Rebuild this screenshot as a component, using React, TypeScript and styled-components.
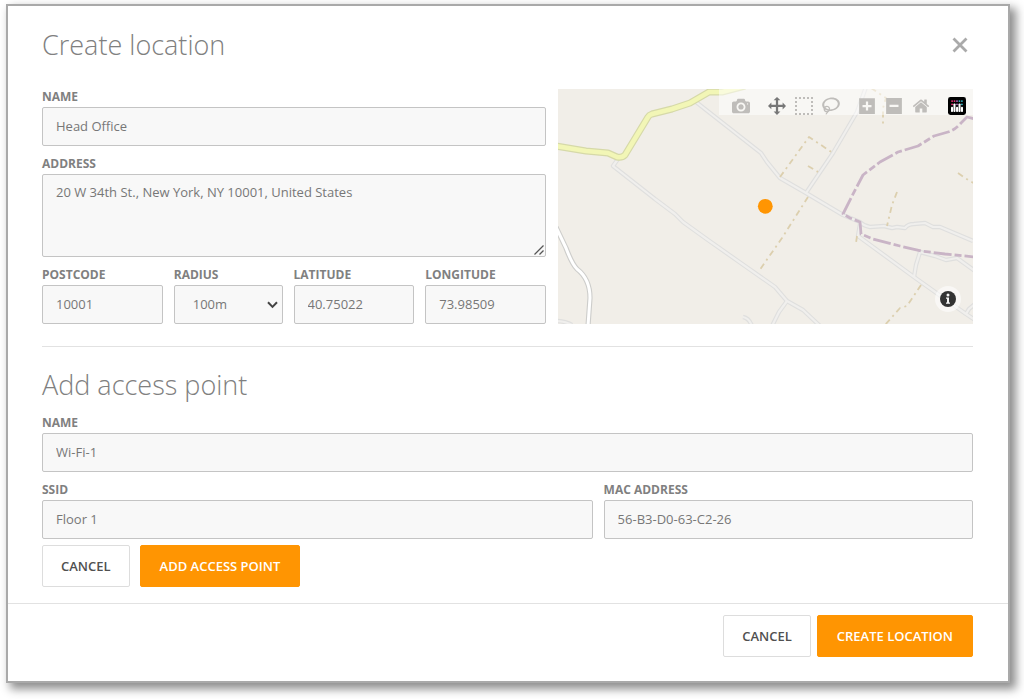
import React from "react";
import styled, { createGlobalStyle, css } from "styled-components";

const GlobalStyle = createGlobalStyle`
  *, *::before, *::after { box-sizing: border-box; }
  body {
    margin: 0;
    background: #fff;
    font-family: "Open Sans", "Noto Sans", sans-serif;
    font-size: 13px;
    color: #777;
  }
`;

const Page = styled.main`
  padding: 4px 14px 16px 6px;
`;

const Dialog = styled.section`
  background: #fff;
  border: 2px solid #a9a9a9;
  box-shadow: 5px 5px 9px 1px rgba(0, 0, 0, 0.45);
`;

const Header = styled.header`
  display: flex;
  align-items: center;
  justify-content: space-between;
  padding: 19px 40px 24px 34px;
`;

const Title = styled.h2`
  margin: 0;
  font-size: 27px;
  line-height: 40px;
  font-weight: 300;
  color: #808080;
`;

const CloseButton = styled.button`
  display: flex;
  padding: 0;
  border: 0;
  background: none;
  color: #aaa;
  cursor: pointer;
`;

const Body = styled.div`
  padding: 0 35px 16px 34px;
`;

const LocationGrid = styled.div`
  display: grid;
  grid-template-columns: 504fr 415fr;
  gap: 12px;
`;

const Stack = styled.div`
  display: flex;
  flex-direction: column;
  gap: 10px;
  min-width: 0;
`;

const Row = styled.div<{ $columns: string }>`
  display: grid;
  grid-template-columns: ${(p) => p.$columns};
  gap: 11px;
`;

const FieldBox = styled.div`
  display: flex;
  flex-direction: column;
  gap: 2px;
  min-width: 0;
`;

const Label = styled.label`
  font-size: 12px;
  line-height: 16px;
  font-weight: 700;
  color: #808080;
  text-transform: uppercase;
`;

const control = css`
  width: 100%;
  border: 1px solid #c4c4c4;
  border-radius: 2px;
  background-color: #f8f8f8;
  color: #777;
  font: inherit;
  outline: none;
`;

const Input = styled.input`
  ${control}
  height: 39px;
  padding: 0 13px 2px;
`;

const ControlWrap = styled.div`
  position: relative;
`;

const Select = styled.select`
  ${control}
  display: block;
  height: 39px;
  padding: 0 24px 2px 18px;
  appearance: none;
`;

const Chevron = styled.svg`
  position: absolute;
  right: 5px;
  top: 16px;
  pointer-events: none;
`;

const TextArea = styled.textarea`
  ${control}
  display: block;
  height: 83px;
  padding: 7px 13px;
  line-height: 20px;
  resize: vertical;

  &::-webkit-resizer {
    background: transparent;
  }
`;

const Grip = styled.svg`
  position: absolute;
  right: 2px;
  bottom: 2px;
  pointer-events: none;
`;

const Divider = styled.hr`
  margin: 22px 0 18px;
  border: 0;
  border-top: 1px solid #e2e2e2;
`;

const Section = styled.section`
  display: flex;
  flex-direction: column;
  gap: 10px;
`;

const Actions = styled.div<{ $gap: number }>`
  display: flex;
  gap: ${(p) => p.$gap}px;
`;

const BodyActions = styled(Actions)`
  padding-top: 6px;
`;

const Button = styled.button<{ $primary?: boolean }>`
  height: 42px;
  padding: 0 ${(p) => (p.$primary ? 19 : 18)}px;
  border: 1px solid ${(p) => (p.$primary ? "#ff9502" : "#ddd")};
  border-radius: 2px;
  background: ${(p) => (p.$primary ? "#ff9502" : "#fff")};
  color: ${(p) => (p.$primary ? "#fff" : "#505050")};
  font: inherit;
  font-weight: 600;
  text-transform: uppercase;
  white-space: nowrap;
  cursor: pointer;
`;

const Footer = styled.footer`
  display: flex;
  justify-content: flex-end;
  padding: 11px 35px 24px;
  border-top: 1px solid #e2e2e2;
`;

const MapFrame = styled.div`
  position: relative;
  min-height: 235px;
  overflow: hidden;
  background: #f1eee8;
`;

const MapCanvas = styled.svg`
  position: absolute;
  inset: 0;
  width: 100%;
  height: 100%;
`;

const ModeBar = styled.div`
  position: absolute;
  top: 0;
  right: 0;
  display: flex;
  gap: 18px;
  padding: 8px 7px 0 13px;
  height: 26px;
  background: rgba(255, 255, 255, 0.5);
`;

const ModeGroup = styled.div`
  display: flex;
  gap: 9px;
`;

const ModeButton = styled.button<{ $active?: boolean }>`
  display: flex;
  align-items: center;
  justify-content: center;
  width: 18px;
  height: 18px;
  padding: 0;
  border: 0;
  background: none;
  color: ${(p) => (p.$active ? "#777" : "#bfbdba")};
  cursor: pointer;
`;

const InfoButton = styled.button`
  position: absolute;
  right: 12px;
  bottom: 12px;
  display: flex;
  align-items: center;
  justify-content: center;
  width: 26px;
  height: 26px;
  padding: 0;
  border: 0;
  border-radius: 50%;
  background: rgba(255, 255, 255, 0.55);
  cursor: pointer;
`;

function Field({ id, label, children }: { id: string; label: string; children: React.ReactNode }) {
  return (
    <FieldBox>
      <Label htmlFor={id}>{label}</Label>
      {children}
    </FieldBox>
  );
}

function TextField({ id, label, value }: { id: string; label: string; value: string }) {
  return (
    <Field id={id} label={label}>
      <Input id={id} type="text" defaultValue={value} />
    </Field>
  );
}

function Glyph({ d, width, size = 18 }: { d: string; width: number; size?: number }) {
  return (
    <svg width={size} height={size} viewBox={`0 0 ${width} 1000`} fill="currentColor" aria-hidden="true">
      <path transform="matrix(1 0 0 -1 0 850)" d={d} />
    </svg>
  );
}

const glyphs = {
  camera:
    "m500 450c-83 0-150-67-150-150 0-83 67-150 150-150 83 0 150 67 150 150 0 83-67 150-150 150z m400 150h-120c-16 0-34 13-39 29l-31 93c-6 15-23 28-40 28h-340c-16 0-34-13-39-28l-31-94c-6-15-23-28-40-28h-120c-55 0-100-45-100-100v-450c0-55 45-100 100-100h800c55 0 100 45 100 100v450c0 55-45 100-100 100z m-400-550c-138 0-250 112-250 250 0 138 112 250 250 250 138 0 250-112 250-250 0-138-112-250-250-250z m365 380c-19 0-35 16-35 35 0 19 16 35 35 35 19 0 35-16 35-35 0-19-16-35-35-35z",
  pan: "m1000 350l-187 188 0-125-250 0 0 250 125 0-188 187-187-187 125 0 0-250-250 0 0 125-188-188 186-187 0 125 252 0 0-250-125 0 187-188 188 188-125 0 0 250 250 0 0-126 187 188z",
  lasso:
    "m1018 538c-36 207-290 336-568 286-277-48-473-256-436-463 10-57 36-108 76-151-13-66 11-137 68-183 34-28 75-41 114-42l-55-70 0 0c-2-1-3-2-4-3-10-14-8-34 5-45 14-11 34-8 45 4 1 1 2 3 2 5l0 0 113 140c16 11 31 24 45 40 4 3 6 7 8 11 48-3 100 0 151 9 278 48 473 255 436 462z m-624-379c-80 14-149 48-197 96 42 42 109 47 156 9 33-26 47-66 41-105z m-187-74c-19 16-33 37-39 60 50-32 109-55 174-68-42-25-95-24-135 8z m360 75c-34-7-69-9-102-8 8 62-16 128-68 170-73 59-175 54-244-5-9 20-16 40-20 61-28 159 121 317 333 354s407-60 434-217c28-159-121-318-333-355z",
  zoomIn:
    "m1 787l0-875 875 0 0 875-875 0z m687-500l-187 0 0-187-125 0 0 187-188 0 0 125 188 0 0 187 125 0 0-187 187 0 0-125z",
  zoomOut: "m0 788l0-876 876 0 0 876-876 0z m688-500l-500 0 0 125 500 0 0-125z",
  home: "m786 296v-267q0-15-11-26t-25-10h-214v214h-143v-214h-214q-15 0-25 10t-11 26v267q0 1 0 2t0 2l321 264 321-264q1-1 1-4z m124 39l-34-41q-5-5-12-6h-2q-7 0-12 3l-386 322-386-322q-7-4-13-4-7 2-12 7l-35 41q-4 5-3 13t6 12l401 334q18 15 42 15t43-15l136-114v109q0 8 5 13t13 5h107q8 0 13-5t5-13v-227l122-102q5-5 6-12t-4-13z",
};

function SelectionGlyph() {
  const steps = [0, 1, 2, 3, 4];
  return (
    <svg width="18" height="18" viewBox="0 0 18 18" fill="currentColor" aria-hidden="true">
      {steps.map((n) => (
        <React.Fragment key={n}>
          <rect x={n * 4} y="0" width="2" height="2" />
          <rect x={n * 4} y="16" width="2" height="2" />
          <rect x="0" y={n * 4} width="2" height="2" />
          <rect x="16" y={n * 4} width="2" height="2" />
        </React.Fragment>
      ))}
    </svg>
  );
}

function BrandGlyph() {
  return (
    <svg width="18" height="18" viewBox="0 0 132 132" aria-hidden="true">
      <rect width="132" height="132" rx="18" fill="#000" />
      <g fill="#fff">
        <rect x="22" y="72" width="15" height="38" rx="6" />
        <rect x="40" y="48" width="15" height="62" rx="6" />
        <rect x="59" y="72" width="15" height="38" rx="6" />
        <rect x="77" y="48" width="15" height="62" rx="6" />
        <rect x="95" y="72" width="15" height="38" rx="6" />
      </g>
      <g fill="#ee3377">
        <circle cx="30" cy="30" r="7" />
        <circle cx="48" cy="30" r="7" />
        <circle cx="30" cy="54" r="7" />
      </g>
      <g fill="#b96dc0">
        <circle cx="66" cy="30" r="7" />
        <circle cx="66" cy="54" r="7" />
      </g>
      <g fill="#35b7c5">
        <circle cx="84" cy="30" r="7" />
        <circle cx="102" cy="30" r="7" />
        <circle cx="102" cy="54" r="7" />
      </g>
    </svg>
  );
}

const lanes = [
  "M696 102 L761 153 L767 162 L780 178 L806 193 L843 215 L860 222 Q864 226 870 227 L884 226 L892 228 L897 227 L905 228 Q908 224 914 224 L925 223 L933 227 L940 227 L973 241",
  "M618 159 L613 166 L655 199 L675 214 L683 222 L708 240 L745 266 L775 287 L787 301 L803 310 L820 326",
  "M787 301 L779 312 L772 326",
  "M743 317 Q749 318 752 326",
  "M866 87 L857 112 L833 153 L806 193",
  "M860 224 L858 236 L914 277 L966 314 L975 320",
  "M914 277 L916 265 L920 252 L935 256 L946 260 L957 258 L975 271",
  "M966 314 L969 309 L975 304",
  "M556 321 Q565 321 572 325",
];

const tracks = [
  "M780 177 L809 137 L833 153",
  "M808 166 L818 172",
  "M808 197 L782 238 L759 271",
  "M897 192 L892 205 L887 226",
  "M958 173 L965 178 L975 184",
  "M871 88 L886 98 L883 108 L883 124",
  "M857 236 L856 243",
  "M921 285 L911 300 L907 306 L900 308 L885 325",
];

const mainRoad =
  "M556 146 L586 151 L608 153 L617 157 Q622 158 625 155 L648 117 Q649 115 652 114 L672 109 L690 103 L709 92 L722 92 L745 86";
const sideRoad = "M556 227 L566 248 Q572 264 577 269 Q590 279 590 298 L588 326";
const boundary =
  "M975 119 L967 117 L961 123 Q955 130 948 132 L934 136 L918 146 L898 152 L880 162 L863 175 L852 196 L843 214 L850 218 L860 222 L861 234 L873 239 L900 246 L921 251 L945 254 L975 257";

function LocationMap() {
  return (
    <MapFrame>
      <MapCanvas
        viewBox="558 89 415 235"
        preserveAspectRatio="xMidYMid slice"
        fill="none"
        strokeLinejoin="round"
        role="img"
        aria-label="Map of the location"
      >
        {lanes.map((d) => (
          <path key={d} d={d} stroke="#dfdfde" strokeWidth="4.4" />
        ))}
        {lanes.map((d) => (
          <path key={d} d={d} stroke="#f0efed" strokeWidth="2.2" />
        ))}
        <path d={sideRoad} stroke="#cdcdcb" strokeWidth="5.2" />
        <path d={sideRoad} stroke="#fff" strokeWidth="3" />
        {tracks.map((d) => (
          <path key={d} d={d} stroke="#dccfae" strokeWidth="1.8" strokeDasharray="6 4 2 4" />
        ))}
        <path d={mainRoad} stroke="#d6d9a8" strokeWidth="7" />
        <path d={mainRoad} stroke="#f2f6b6" strokeWidth="4.6" />
        <path d={boundary} stroke="#c9b4c6" strokeWidth="2.8" strokeDasharray="18 3 7 3" />
        <circle cx="765.3" cy="206.3" r="7.4" fill="#ff9502" />
      </MapCanvas>
      <ModeBar>
        <ModeGroup>
          <ModeButton type="button" aria-label="Download plot as a png">
            <Glyph d={glyphs.camera} width={1000} />
          </ModeButton>
        </ModeGroup>
        <ModeGroup>
          <ModeButton type="button" $active aria-label="Pan">
            <Glyph d={glyphs.pan} width={1000} />
          </ModeButton>
          <ModeButton type="button" aria-label="Box select">
            <SelectionGlyph />
          </ModeButton>
          <ModeButton type="button" aria-label="Lasso select">
            <Glyph d={glyphs.lasso} width={1031} />
          </ModeButton>
        </ModeGroup>
        <ModeGroup>
          <ModeButton type="button" aria-label="Zoom in">
            <Glyph d={glyphs.zoomIn} width={875} />
          </ModeButton>
          <ModeButton type="button" aria-label="Zoom out">
            <Glyph d={glyphs.zoomOut} width={875} />
          </ModeButton>
          <ModeButton type="button" aria-label="Reset view">
            <Glyph d={glyphs.home} width={928} />
          </ModeButton>
        </ModeGroup>
        <ModeGroup>
          <ModeButton type="button" aria-label="About this chart">
            <BrandGlyph />
          </ModeButton>
        </ModeGroup>
      </ModeBar>
      <InfoButton type="button" aria-label="Map attribution">
        <svg width="18" height="18" viewBox="0 0 18 18" aria-hidden="true">
          <circle cx="9" cy="9" r="8" fill="#333" />
          <circle cx="9" cy="5" r="1.5" fill="#f5f5f5" />
          <path d="M7 7.5h3v5h1v1.3H7v-1.3h1V8.7H7z" fill="#f5f5f5" />
        </svg>
      </InfoButton>
    </MapFrame>
  );
}

export default function App() {
  return (
    <>
      <GlobalStyle />
      <Page>
        <Dialog role="dialog" aria-labelledby="dialog-title">
          <Header>
            <Title id="dialog-title">Create location</Title>
            <CloseButton type="button" aria-label="Close">
              <svg width="16" height="16" viewBox="0 0 16 16" stroke="currentColor" strokeWidth="2.8" aria-hidden="true">
                <path d="M1.5 1.5l13 13M14.5 1.5l-13 13" />
              </svg>
            </CloseButton>
          </Header>
          <Body>
            <LocationGrid>
              <Stack>
                <TextField id="location-name" label="Name" value="Head Office" />
                <Field id="address" label="Address">
                  <ControlWrap>
                    <TextArea id="address" defaultValue="20 W 34th St., New York, NY 10001, United States" />
                    <Grip width="10" height="10" viewBox="0 0 10 10" stroke="#555" strokeWidth="1.3" aria-hidden="true">
                      <path d="M0.5 9.5l9-9M5.5 9.5l4-4" />
                    </Grip>
                  </ControlWrap>
                </Field>
                <Row $columns="121fr 109fr 121fr 121fr">
                  <TextField id="postcode" label="Postcode" value="10001" />
                  <Field id="radius" label="Radius">
                    <ControlWrap>
                      <Select id="radius" defaultValue="100m">
                        <option>100m</option>
                        <option>200m</option>
                        <option>500m</option>
                      </Select>
                      <Chevron width="11" height="8" viewBox="0 0 11 8" fill="none" stroke="#444" strokeWidth="2" aria-hidden="true">
                        <path d="M1 1.3l4.5 4.6L10 1.3" />
                      </Chevron>
                    </ControlWrap>
                  </Field>
                  <TextField id="latitude" label="Latitude" value="40.75022" />
                  <TextField id="longitude" label="Longitude" value="73.98509" />
                </Row>
              </Stack>
              <LocationMap />
            </LocationGrid>
            <Divider />
            <Section aria-labelledby="access-title">
              <Title id="access-title">Add access point</Title>
              <TextField id="access-name" label="Name" value="Wi-Fi-1" />
              <Row $columns="550fr 369fr">
                <TextField id="ssid" label="SSID" value="Floor 1" />
                <TextField id="mac" label="MAC address" value="56-B3-D0-63-C2-26" />
              </Row>
            </Section>
            <BodyActions $gap={10}>
              <Button type="button">Cancel</Button>
              <Button type="button" $primary>
                Add access point
              </Button>
            </BodyActions>
          </Body>
          <Footer>
            <Actions $gap={6}>
              <Button type="button">Cancel</Button>
              <Button type="submit" $primary>
                Create location
              </Button>
            </Actions>
          </Footer>
        </Dialog>
      </Page>
    </>
  );
}
